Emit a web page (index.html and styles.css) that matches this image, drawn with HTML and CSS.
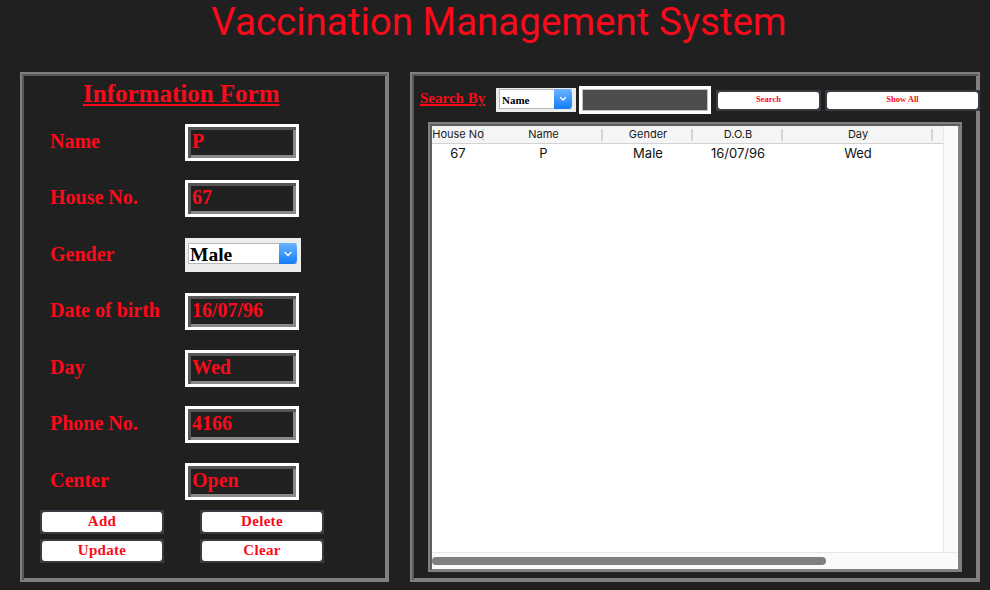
FILE: index.html
```html
<!DOCTYPE html>
<html lang="en">
<head>
<meta charset="utf-8">
<title>Vaccination Management System</title>
<link rel="stylesheet" href="styles.css">
</head>
<body>
<header class="title">Vaccination Management System</header>
<main class="layout">
  <section class="panel form-panel">
    <h1 class="form-heading">Information Form</h1>
    <div class="form-grid">
      <div class="field-label">Name</div>
      <div class="field">P</div>
      <div class="field-label">House No.</div>
      <div class="field">67</div>
      <div class="field-label">Gender</div>
      <div class="select select-lg">
        <div class="select-box"><span class="select-text">Male</span><span class="select-btn"><svg width="10" height="8" viewBox="0 0 10 8"><path d="M2 2.5 L5 5.5 L8 2.5" fill="none" stroke="#fff" stroke-width="1.4" stroke-linecap="round" stroke-linejoin="round"/></svg></span></div>
      </div>
      <div class="field-label">Date of birth</div>
      <div class="field">16/07/96</div>
      <div class="field-label">Day</div>
      <div class="field">Wed</div>
      <div class="field-label">Phone No.</div>
      <div class="field">4166</div>
      <div class="field-label">Center</div>
      <div class="field">Open</div>
    </div>
    <div class="actions">
      <div class="btn-frame"><button class="btn">Add</button></div>
      <div class="btn-frame"><button class="btn">Delete</button></div>
      <div class="btn-frame"><button class="btn">Update</button></div>
      <div class="btn-frame"><button class="btn">Clear</button></div>
    </div>
  </section>
  <section class="panel table-panel">
    <div class="toolbar">
      <div class="search-label">Search By</div>
      <div class="select select-sm">
        <div class="select-box"><span class="select-text">Name</span><span class="select-btn"><svg width="10" height="8" viewBox="0 0 10 8"><path d="M2.5 2.5 L5 5 L7.5 2.5" fill="none" stroke="#fff" stroke-width="1.3" stroke-linecap="round" stroke-linejoin="round"/></svg></span></div>
      </div>
      <div class="search-input"></div>
      <div class="sbtn-frame search-frame"><button class="sbtn">Search</button></div>
      <div class="sbtn-frame showall-frame"><button class="sbtn">Show All</button></div>
    </div>
    <div class="table-frame">
      <div class="table-main">
        <div class="thead">
          <div class="th">House No</div>
          <div class="th">Name</div>
          <div class="th">Gender</div>
          <div class="th">D.O.B</div>
          <div class="th">Day</div>
        </div>
        <div class="tr">
          <div class="td">67</div>
          <div class="td">P</div>
          <div class="td">Male</div>
          <div class="td">16/07/96</div>
          <div class="td">Wed</div>
        </div>
      </div>
      <div class="vtrack"></div>
      <div class="htrack"><div class="thumb"></div></div>
    </div>
  </section>
</main>
</body>
</html>
```
FILE: styles.css
```css
html, body {
  margin: 0;
  padding: 0;
}
body {
  width: 990px;
  height: 590px;
  overflow: hidden;
  background: #202020;
  color: #fa0a1a;
}
.title {
  box-sizing: border-box;
  height: 72px;
  margin: 0;
  padding: 0 0 0 8px;
  text-align: center;
  font-family: Roboto, "Liberation Sans", sans-serif;
  font-weight: 400;
  font-size: 38.5px;
  line-height: 44px;
  color: #fa0a1a;
}
.layout {
  display: flex;
  gap: 21px;
  padding-left: 20px;
}
.panel {
  box-sizing: border-box;
  height: 510px;
  border: 2px solid #808080;
  box-shadow: inset 2px 2px 0 #585858, inset -2px -2px 0 #808080;
  padding: 2px;
  font-family: "Liberation Serif", serif;
}
.form-panel {
  width: 369px;
  flex-shrink: 0;
}
.table-panel {
  width: 570px;
  flex-shrink: 0;
}
.form-heading {
  margin: 0;
  height: 38px;
  line-height: 36px;
  padding-left: 59px;
  font-size: 25px;
  font-weight: 700;
  color: #fa0a1a;
  text-decoration: underline;
  text-decoration-thickness: 2px;
  text-underline-offset: 2px;
}
.form-grid {
  display: grid;
  grid-template-columns: 135px 116px;
  grid-auto-rows: 56.5px;
  align-items: center;
  padding-left: 26px;
}
.field-label {
  font-size: 20px;
  font-weight: 700;
  line-height: 23px;
  padding-bottom: 2px;
  color: #fa0a1a;
  white-space: nowrap;
}
.field {
  box-sizing: border-box;
  width: 114px;
  height: 37px;
  border: 3px solid #fff;
  background: #202020;
  box-shadow: inset 3px 3px 0 #565656, inset -3px -3px 0 #898989;
  padding: 3px 4px 5px 4px;
  font-size: 20px;
  font-weight: 700;
  line-height: 23px;
  color: #fa0a1a;
}
.select {
  box-sizing: border-box;
  background: #ececec;
}
.select-box {
  display: flex;
  box-sizing: border-box;
  background: #fff;
  border: 1px solid #b8b8b8;
  border-right: none;
}
.select-text {
  color: #000;
  white-space: nowrap;
}
.select-btn {
  display: flex;
  align-items: center;
  justify-content: center;
  margin: -1px 0 -1px auto;
  width: 18px;
  border-radius: 0 4px 4px 0;
  background: linear-gradient(#6ab3ff, #157cf6);
}
.select-lg {
  width: 116px;
  height: 34px;
  padding: 5px 4px 8px 3px;
}
.select-lg .select-box {
  height: 21px;
}
.select-lg .select-text {
  font-size: 19.5px;
  font-weight: 700;
  line-height: 19px;
  padding: 1px 0 0 1px;
}
.select-sm {
  width: 80px;
  height: 24px;
  padding: 1px 4px 3px 3px;
  margin-right: 3px;
  flex-shrink: 0;
}
.select-sm .select-box {
  height: 20px;
}
.select-sm .select-text {
  font-size: 11px;
  font-weight: 700;
  line-height: 18px;
  padding: 1px 0 0 2px;
}
.actions {
  display: grid;
  grid-template-columns: 124px 124px;
  column-gap: 36px;
  row-gap: 5px;
  padding-left: 16px;
}
.btn-frame {
  box-sizing: border-box;
  height: 24px;
  padding: 2px;
  background: #383b41;
}
.btn {
  display: block;
  width: 100%;
  height: 20px;
  margin: 0;
  padding: 0;
  border: 0;
  border-radius: 3px;
  background: #fff;
  color: #fa0a1a;
  font-family: "Liberation Serif", serif;
  font-size: 15px;
  font-weight: 700;
  line-height: 19px;
  letter-spacing: 0.3px;
}
.toolbar {
  display: flex;
  align-items: center;
  height: 28px;
  margin-top: 10px;
  padding-left: 6px;
}
.search-label {
  width: 76px;
  flex-shrink: 0;
  font-size: 15px;
  font-weight: 700;
  line-height: 17px;
  padding-bottom: 3px;
  color: #fa0a1a;
  text-decoration: underline;
  text-decoration-thickness: 2px;
  white-space: nowrap;
}
.search-input {
  box-sizing: border-box;
  width: 132px;
  height: 28px;
  flex-shrink: 0;
  margin-right: 5px;
  border: 3px solid #fff;
  background: #4d4d4d;
  box-shadow: inset 0 0 0 1px #c2c2c2;
}
.sbtn-frame {
  box-sizing: border-box;
  height: 21px;
  padding: 2px;
  flex-shrink: 0;
  background: #383b41;
}
.search-frame {
  width: 105px;
  margin-right: 4px;
}
.showall-frame {
  width: 155px;
}
.sbtn {
  display: block;
  width: 100%;
  height: 17px;
  margin: 0;
  padding: 0 0 2px 0;
  border: 0;
  border-radius: 3px;
  background: #fff;
  color: #fa0a1a;
  font-family: "Liberation Serif", serif;
  font-size: 8.5px;
  font-weight: 700;
  line-height: 15px;
}
.table-frame {
  box-sizing: border-box;
  width: 534px;
  height: 450px;
  margin: 8px 0 0 14px;
  border: 2px solid #808080;
  padding: 2px 2px 1px 2px;
  box-shadow: inset 2px 2px 0 #5e5e5e, inset -2px -1px 0 #808080;
  display: grid;
  grid-template-columns: 1fr 15px;
  grid-template-rows: 1fr 17px;
}
.table-main {
  background: #fff;
  overflow: hidden;
  font-family: Inter, "Liberation Sans", sans-serif;
}
.thead, .tr {
  display: grid;
  grid-template-columns: 52px 119px 90px 90px 150px;
  text-align: center;
  white-space: nowrap;
}
.thead {
  height: 17px;
  background: #f5f5f5;
  border-bottom: 1px solid #d2d2d2;
  font-size: 11px;
  line-height: 17px;
  color: #1a1a1a;
}
.th {
  background: linear-gradient(#d4d4d4, #d4d4d4) right 3px / 2px 12px no-repeat;
}
.tr {
  height: 18px;
  font-size: 13px;
  line-height: 18px;
  color: #111;
}
.vtrack {
  background: #fafafa;
  border-left: 1px solid #e6e6e6;
}
.htrack {
  grid-column: 1 / 3;
  box-sizing: border-box;
  background: #fafafa;
  border-top: 1px solid #e6e6e6;
  padding-top: 3.7px;
}
.thumb {
  width: 394px;
  height: 8.5px;
  border-radius: 4.25px;
  background: #7f7f7f;
}
```
